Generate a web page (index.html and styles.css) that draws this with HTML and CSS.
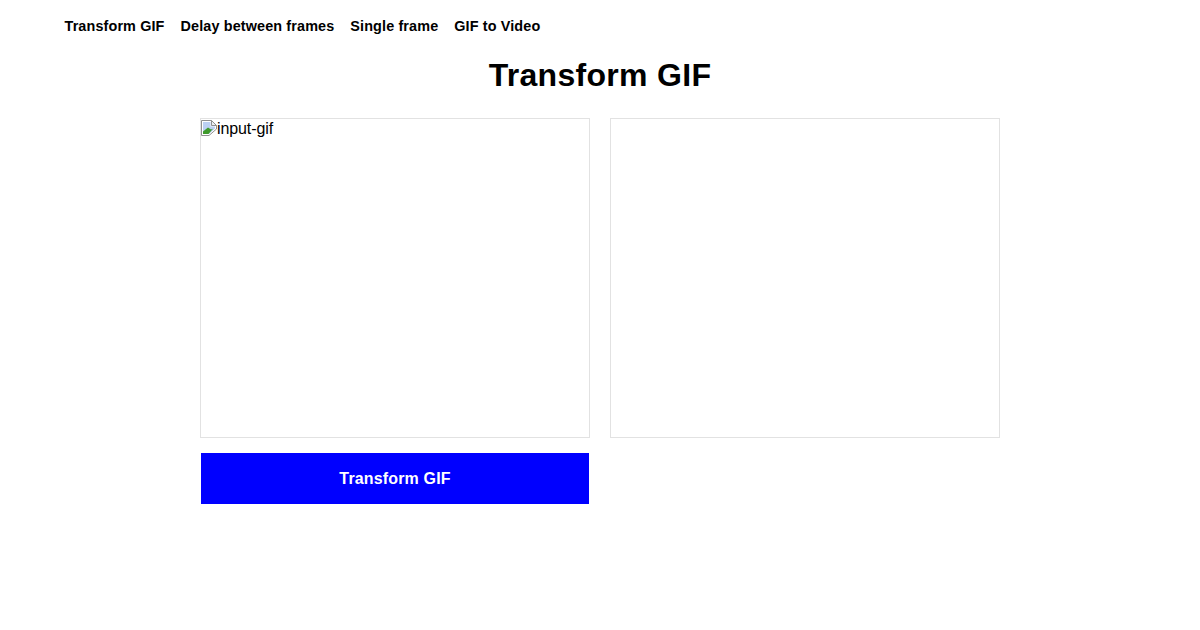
FILE: index.html
```html
<!DOCTYPE html>
<html>
<head>
  <title>Transform GIF</title>
  <link rel="stylesheet" href="styles.css">
</head>
<body>
  <nav class="nav">
    <a href="#" class="nav-link">Transform GIF</a>
    <a href="#" class="nav-link">Delay between frames</a>
    <a href="#" class="nav-link">Single frame</a>
    <a href="#" class="nav-link">GIF to Video</a>
  </nav>
  <h1 class="title">Transform GIF</h1>
  <div class="panels">
    <div class="col">
      <div class="panel">
        <span class="broken">
          <svg class="broken-icon" width="16" height="16" viewBox="0 0 16 16">
            <path d="M.5 15.5V.5H10.5L15.5 5.5V9L8 15.5Z" fill="#fff" stroke="#8f8f8f"/>
            <path d="M10.5 .5V5.5H15.5Z" fill="#eceff3" stroke="#8f8f8f"/>
            <path d="M2 2H9.5V6.5H14V8.5L8 14H2Z" fill="#bcd0f2"/>
            <path d="M2 14V11.5L7 7.5L10 9.5L12 8.8L7.5 14Z" fill="#3f9a2c"/>
          </svg>input-gif
        </span>
      </div>
      <button class="btn">Transform GIF</button>
    </div>
    <div class="col">
      <div class="panel"></div>
    </div>
  </div>
</body>
</html>
```

FILE: styles.css
```css
* {
  box-sizing: border-box;
}
body {
  margin: 0;
  font-family: Helvetica, "Liberation Sans", Arial, sans-serif;
  color: #000;
  background: #fff;
}
.nav {
  display: flex;
  gap: 16px;
  padding: 18px 64.5px 0;
}
.nav-link {
  color: #000;
  font-size: 14.4px;
  line-height: 17px;
  font-weight: 700;
  letter-spacing: .13px;
  text-decoration: none;
}
.title {
  margin: 22px 0 0;
  font-size: 32px;
  line-height: 37px;
  letter-spacing: .3px;
  text-align: center;
}
.panels {
  width: 800px;
  margin: 24px auto 0;
  display: flex;
  gap: 20px;
}
.col {
  width: 390px;
}
.panel {
  height: 320px;
  border: 1px solid #e2e2e2;
}
.broken {
  display: block;
  font-size: 16px;
  line-height: 19px;
  letter-spacing: -.1px;
}
.broken-icon {
  vertical-align: -2px;
}
.btn {
  display: block;
  width: 388px;
  height: 51px;
  margin: 15px 1px 0;
  border: 0;
  background: #00f;
  color: #fff;
  font-family: inherit;
  font-size: 16px;
  font-weight: 700;
  letter-spacing: .15px;
}
```
